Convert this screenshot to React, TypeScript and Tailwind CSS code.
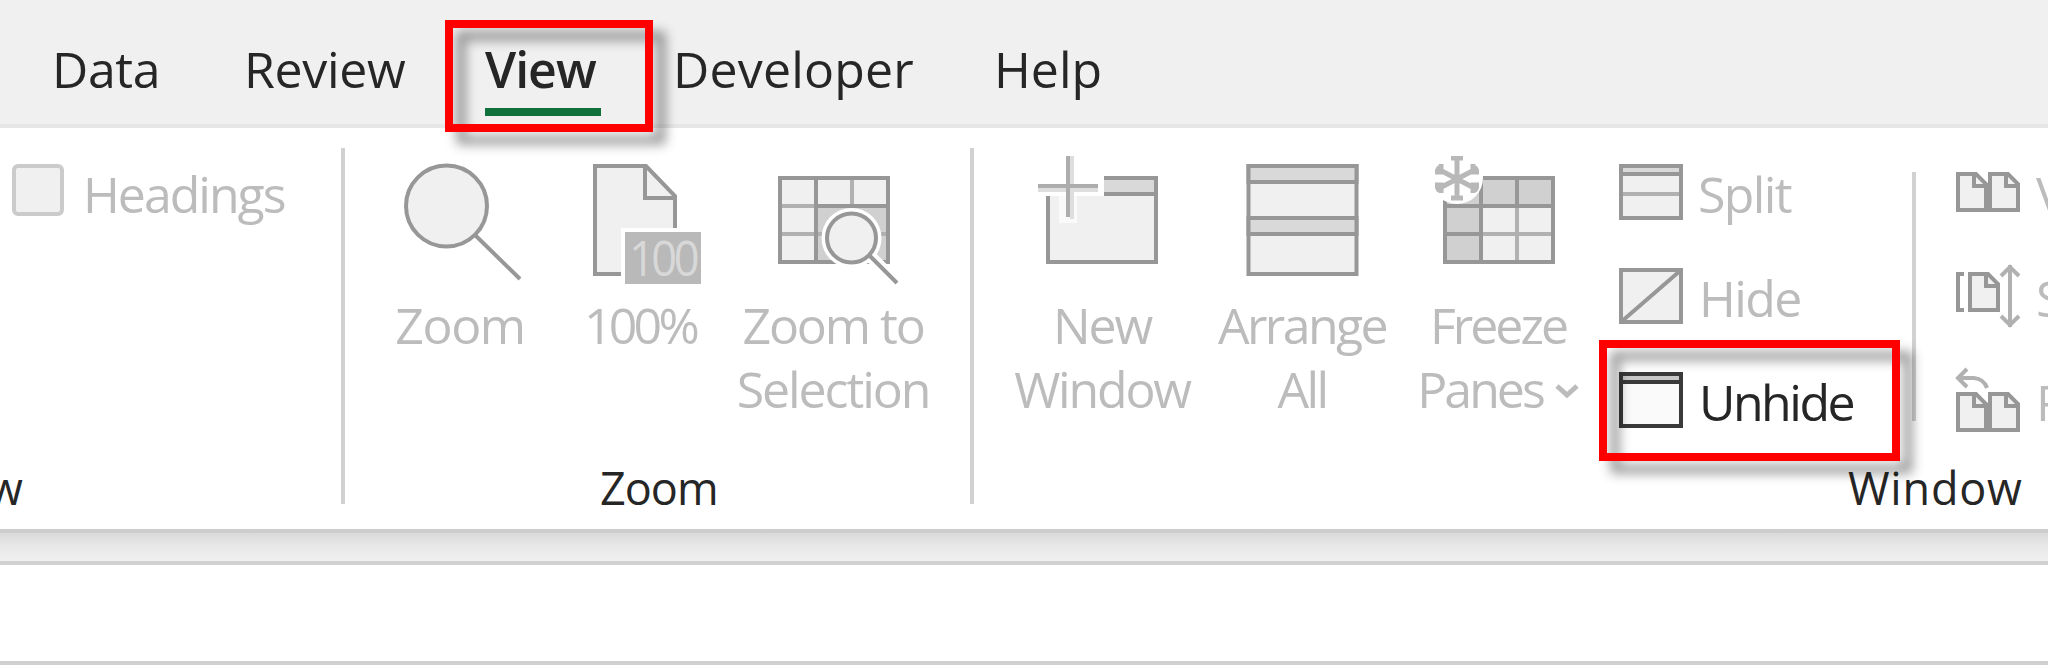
import React from 'react';

const INK = '#979797';
const SOFT = '#b1b1b1';
const PANEL = '#f0f0f0';

const TABS = [
  { label: 'Data', className: 'ml-[52px] w-[112px] tracking-[-0.4px]' },
  { label: 'Review', className: 'ml-[80px] w-[166px] tracking-[-0.3px]' },
  { label: 'View', className: 'ml-[75px] w-[118px] font-semibold tracking-[-1px]', active: true },
  { label: 'Developer', className: 'ml-[70px] w-[244px] tracking-[0.2px]' },
  { label: 'Help', className: 'ml-[77px] w-[110px]' },
];

const ZoomIcon = () => (
  <svg width="170" height="137" viewBox="375 156 170 137" fill="none" stroke={INK} strokeWidth="4">
    <circle cx="446.500" cy="206" r="40.500" fill={PANEL} />
    <path d="M475 235L520 279" />
  </svg>
);

const HundredIcon = () => (
  <svg width="190" height="137" viewBox="545 156 190 137" fill="none" stroke={INK} strokeWidth="4">
    <path d="M595 166H646L675 196V274H595Z" fill={PANEL} />
    <path d="M645 166V198H675" />
    <rect x="621" y="228" width="85" height="60" fill="#fff" stroke="none" />
    <rect x="625" y="232" width="76" height="52" fill="#b9b9b9" stroke="none" />
    <text x="629" y="276" fill="#d8d8d8" stroke="none" fontSize="49" textLength="67" lengthAdjust="spacingAndGlyphs">
      100
    </text>
  </svg>
);

const ZoomSelectionIcon = () => (
  <svg width="196" height="137" viewBox="735 156 196 137" fill="none" strokeWidth="4">
    <path d="M780 178H888V262H780Z" fill={PANEL} />
    <path d="M816 206H888V262H816Z" fill="#d0d0d0" />
    <path d="M780 206H816M780 234H888M852 178V206" stroke={SOFT} />
    <path d="M780 178H888V262H780ZM816 178V262M816 206H888" stroke={INK} />
    <circle cx="851.500" cy="238" r="30" fill="#fff" />
    <path d="M866 252L900 286" stroke="#fff" strokeWidth="12" />
    <path d="M888 206V262" stroke={INK} />
    <circle cx="851.500" cy="238" r="24.500" fill={PANEL} stroke={INK} />
    <path d="M869 255L897 283" stroke={INK} />
  </svg>
);

const NewWindowIcon = () => (
  <svg width="200" height="137" viewBox="1002 156 200 137" fill="none" stroke={INK} strokeWidth="4">
    <path d="M1048 196H1156V262H1048Z" fill={PANEL} stroke="none" />
    <path d="M1104 178H1156V194H1104" fill="#d9d9d9" />
    <path d="M1048 196V262H1156V194" />
    <path d="M1068 196V223" stroke="#fafafa" strokeWidth="18" />
    <path d="M1038 190H1098M1072 156V219" stroke="#dedede" />
    <path d="M1038 186H1098M1068 156V217" stroke="#adadad" />
  </svg>
);

const ArrangeIcon = () => (
  <svg width="200" height="137" viewBox="1202 156 200 137" fill={PANEL} stroke={INK} strokeWidth="4">
    <path d="M1248.500 166H1356.500V274H1248.500Z" />
    <path d="M1248.500 166H1356.500V182H1248.500ZM1248.500 218H1356.500V234H1248.500Z" fill="#d9d9d9" />
  </svg>
);

const FreezeIcon = () => (
  <svg width="192" height="137" viewBox="1402 156 192 137" fill="none" strokeWidth="4">
    <path d="M1445 178H1553V262H1445Z" fill="#d0d0d0" />
    <path d="M1481 206H1553V262H1481Z" fill={PANEL} />
    <path d="M1481 234H1553M1517 206V262" stroke={SOFT} />
    <path d="M1445 178H1553V262H1445ZM1445 206H1553M1481 178V262M1445 234H1481M1517 178V206" stroke={INK} />
    <circle cx="1457" cy="178" r="26" fill="#fff" />
    <path
      d="M1457 156V200M1436 168L1478 190M1436 190L1478 168M1451 158H1463M1451 198H1463M1441 164V172H1435M1473 164V172H1479M1441 193V185H1435M1473 193V185H1479"
      stroke="#b8b8b8"
      strokeWidth="5"
    />
  </svg>
);

const SplitIcon = () => (
  <svg width="64" height="56" fill="none" stroke={INK} strokeWidth="4">
    <path d="M2 2H62V54H2Z" fill={PANEL} />
    <path d="M2 2H62V10H2Z" fill="#d9d9d9" />
    <path d="M4 30H60" stroke={SOFT} />
  </svg>
);

const HideIcon = () => (
  <svg width="64" height="56" fill={PANEL} stroke={INK} strokeWidth="4">
    <path d="M2 2H62V54H2ZM2 54L62 2" />
  </svg>
);

const UnhideIcon = () => (
  <svg width="64" height="56" fill="#fafafa" stroke="#3a3a3a" strokeWidth="4">
    <path d="M2 2H62V54H2Z" />
    <path d="M2 2H62V10H2Z" fill="#c8c8c8" />
  </svg>
);

// Two documents next to each other, shared by the side by side and reset commands
const Pages = () => (
  <>
    <path d="M2 14H20L30 24V50H2ZM34 14H52L62 24V50H34Z" fill={PANEL} />
    <path d="M18 14V26H30M50 14V26H62" />
  </>
);

const SideBySideIcon = () => (
  <svg width="64" height="56" viewBox="0 4 64 56" className="overflow-visible" fill="none" stroke={INK} strokeWidth="4">
    <Pages />
  </svg>
);

const SyncIcon = () => (
  <svg width="64" height="56" className="overflow-visible" fill="none" stroke={INK} strokeWidth="4">
    <path d="M8 6H2V42H8" />
    <path d="M14 6H32L42 16V42H14Z" fill={PANEL} />
    <path d="M30 6V18H42" />
    <path d="M54 -3V59M45 8L54 -1L63 8M45 48L54 57L63 48" stroke={SOFT} />
  </svg>
);

const ResetIcon = () => (
  <svg width="64" height="56" viewBox="0 -8 64 56" className="overflow-visible" fill="none" stroke={INK} strokeWidth="4">
    <Pages />
    <path d="M11 -11L2 -2L11 7M2 -2H18Q28 -1 31 8" stroke={SOFT} />
  </svg>
);

interface BigButtonProps {
  icon: React.ReactNode;
  lines: string[];
  className: string;
  chevron?: boolean;
}

const BigButton = ({ icon, lines, className, chevron = false }: BigButtonProps) => (
  <button className={`flex shrink-0 flex-col items-center text-[50px] leading-[64px] text-[#bcbcbc] ${className}`}>
    {icon}
    {lines.map((line, i) => (
      <span key={line} className="flex items-center whitespace-nowrap">
        {line}
        {chevron && i === lines.length - 1 && (
          <svg width="24" height="14" className="ml-3 mt-1" fill="none" stroke="currentColor" strokeWidth="5">
            <path d="M2 2L12 11L22 2" />
          </svg>
        )}
      </span>
    ))}
  </button>
);

interface SmallButtonProps {
  icon: React.ReactNode;
  label: string;
  className?: string;
}

const SmallButton = ({ icon, label, className = 'gap-[16px] text-[#bcbcbc]' }: SmallButtonProps) => (
  <button className={`flex h-[104px] items-start text-[50px] leading-[60px] ${className}`}>
    <span className="shrink-0">{icon}</span>
    <span>{label}</span>
  </button>
);

const Divider = ({ className = 'mt-5 h-[356px]' }: { className?: string }) => (
  <div className={`w-1 shrink-0 bg-[#d1d1d1] ${className}`} />
);

const GroupLabel = ({ text, className }: { text: string; className: string }) => (
  <div className={`text-[45px] font-medium leading-[61px] text-[#262626] ${className}`}>{text}</div>
);

const RedFrame = ({ className }: { className: string }) => (
  <div className={`pointer-events-none absolute border-8 border-[#ff0000] drop-shadow-[12px_12px_6px_rgba(0,0,0,0.45)] ${className}`} />
);

export default function App() {
  return (
    <div className="relative flex h-[665px] w-[2048px] flex-col overflow-hidden bg-white font-['Open_Sans','Noto_Sans',sans-serif]">
      {/* Tabs */}
      <nav className="flex h-[128px] shrink-0 border-b-4 border-[#e7e7e7] bg-[#f0f0f0] pt-[37px] text-[50px] leading-[64px] text-[#262626]">
        {TABS.map((tab) => (
          <div key={tab.label} className={`shrink-0 ${tab.className}`}>
            {tab.label}
            {tab.active && <div className="mt-[7px] h-2 w-[116px] bg-[#0f703b]" />}
          </div>
        ))}
      </nav>

      {/* Ribbon */}
      <section className="flex h-[401px] shrink-0 overflow-hidden">
        <div className="flex w-[341px] shrink-0 flex-col">
          <div className="flex h-[329px] items-start pt-9 text-[50px] leading-[60px] text-[#bcbcbc]">
            <span className="ml-3 h-[52px] w-[52px] shrink-0 rounded-md border-4 border-[#cbcbcb] bg-[#f0f0f0]" />
            <span className="ml-[19px] tracking-[-2px]">Headings</span>
          </div>
          <GroupLabel text="w" className="-ml-[12px]" />
        </div>
        <Divider />
        <div className="flex w-[625px] shrink-0 flex-col">
          <div className="flex h-[329px] items-start pl-[30px] pt-7">
            <BigButton icon={<ZoomIcon />} lines={['Zoom']} className="w-[170px] tracking-[-1.4px]" />
            <BigButton icon={<HundredIcon />} lines={['100%']} className="w-[190px] tracking-[-3.8px]" />
            <BigButton icon={<ZoomSelectionIcon />} lines={['Zoom to', 'Selection']} className="w-[196px] tracking-[-2.1px]" />
          </div>
          <GroupLabel text="Zoom" className="pl-[255px] tracking-[-1px]" />
        </div>
        <Divider />
        <div className="flex w-[1074px] shrink-0 flex-col">
          <div className="flex h-[329px] items-start pl-7">
            <BigButton icon={<NewWindowIcon />} lines={['New', 'Window']} className="mt-7 w-[200px] tracking-[-2.2px]" />
            <BigButton icon={<ArrangeIcon />} lines={['Arrange', 'All']} className="mt-7 w-[200px] tracking-[-2.6px]" />
            <BigButton icon={<FreezeIcon />} lines={['Freeze', 'Panes']} className="mt-7 w-[192px] tracking-[-3px]" chevron />
            <div className="ml-[25px] mt-9 w-[293px] shrink-0">
              <SmallButton icon={<SplitIcon />} label="Split" className="gap-[15px] tracking-[-1.6px] text-[#bcbcbc]" />
              <SmallButton icon={<HideIcon />} label="Hide" className="gap-[16px] tracking-[-1.6px] text-[#bcbcbc]" />
              <SmallButton icon={<UnhideIcon />} label="Unhide" className="gap-[16px] tracking-[-2.5px] text-[#262626]" />
            </div>
            <Divider className="mt-11 h-[249px]" />
            <div className="ml-10 mt-9 shrink-0">
              <SmallButton icon={<SideBySideIcon />} label="V" />
              <SmallButton icon={<SyncIcon />} label="S" />
              <SmallButton icon={<ResetIcon />} label="R" />
            </div>
          </div>
          <GroupLabel text="Window" className="pl-[874px] tracking-[0.8px]" />
        </div>
      </section>

      {/* Ribbon shadow and formula bar */}
      <div className="h-1 shrink-0 bg-[#cdcdcd]" />
      <div className="h-7 shrink-0 bg-linear-to-b from-[#dadada] via-[#e9e9e9] to-[#f0f0f0]" />
      <div className="h-[104px] shrink-0 border-y-4 border-[#d1d1d1] bg-white" />

      <RedFrame className="left-[445px] top-5 h-28 w-[208px]" />
      <RedFrame className="left-[1599px] top-[340px] h-[121px] w-[301px]" />
    </div>
  );
}
